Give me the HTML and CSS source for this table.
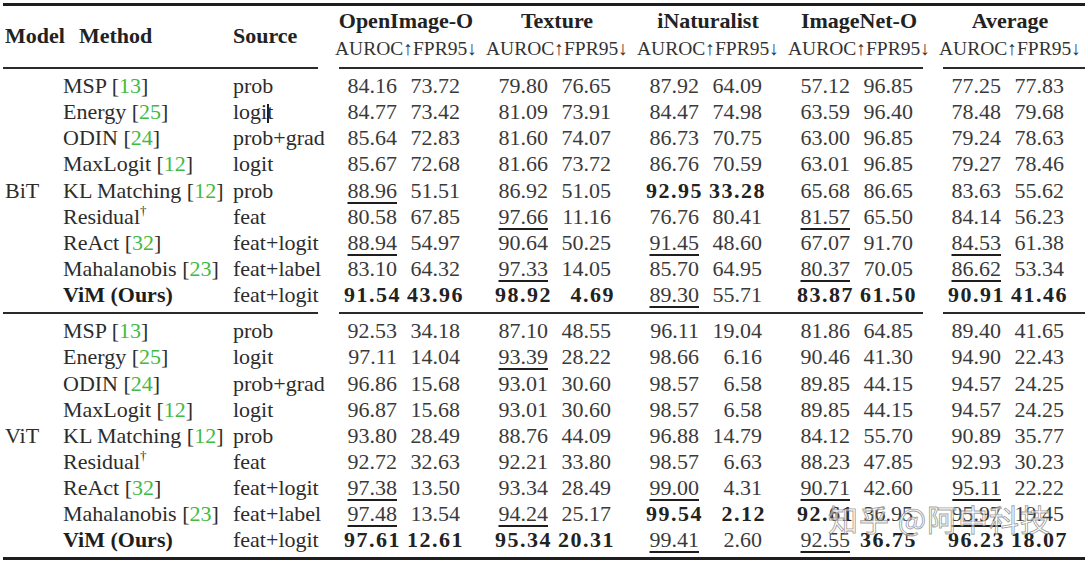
FILE: index.html
```html
<!DOCTYPE html>
<html lang="en">
<head>
<meta charset="utf-8">
<title>OOD results</title>
<link rel="stylesheet" href="styles.css">
</head>
<body>
<div class="tbl">
  <div class="head">
    <div class="hmdl">Model</div>
    <div class="hmeth">Method</div>
    <div class="hsrc">Source</div>
    <div class="hvals">
      <div class="hg"><div class="t">OpenImage-O</div><div class="s">AUROC↑FPR95↓</div></div>
      <div class="hg"><div class="t">Texture</div><div class="s">AUROC↑FPR95↓</div></div>
      <div class="hg"><div class="t">iNaturalist</div><div class="s">AUROC↑FPR95↓</div></div>
      <div class="hg"><div class="t">ImageNet-O</div><div class="s">AUROC↑FPR95↓</div></div>
      <div class="hg"><div class="t">Average</div><div class="s">AUROC↑FPR95↓</div></div>
    </div>
  </div>
  <div class="rule"><i class="l"></i><i class="mid"></i><i class="r"></i></div>

  <div class="row"><span class="mdl"></span><span class="meth">MSP <span class="ref">[<span class="c">13</span>]</span></span><span class="src">prob</span>
    <div class="vals"><div class="g"><span>84.16</span><span>73.72</span></div><div class="g"><span>79.80</span><span>76.65</span></div><div class="g"><span>87.92</span><span>64.09</span></div><div class="g"><span>57.12</span><span>96.85</span></div><div class="g"><span>77.25</span><span>77.83</span></div></div></div>
  <div class="row"><span class="mdl"></span><span class="meth">Energy <span class="ref">[<span class="c">25</span>]</span></span><span class="src">logi<span class="caret"></span>t</span>
    <div class="vals"><div class="g"><span>84.77</span><span>73.42</span></div><div class="g"><span>81.09</span><span>73.91</span></div><div class="g"><span>84.47</span><span>74.98</span></div><div class="g"><span>63.59</span><span>96.40</span></div><div class="g"><span>78.48</span><span>79.68</span></div></div></div>
  <div class="row"><span class="mdl"></span><span class="meth">ODIN <span class="ref">[<span class="c">24</span>]</span></span><span class="src">prob+grad</span>
    <div class="vals"><div class="g"><span>85.64</span><span>72.83</span></div><div class="g"><span>81.60</span><span>74.07</span></div><div class="g"><span>86.73</span><span>70.75</span></div><div class="g"><span>63.00</span><span>96.85</span></div><div class="g"><span>79.24</span><span>78.63</span></div></div></div>
  <div class="row"><span class="mdl"></span><span class="meth">MaxLogit <span class="ref">[<span class="c">12</span>]</span></span><span class="src">logit</span>
    <div class="vals"><div class="g"><span>85.67</span><span>72.68</span></div><div class="g"><span>81.66</span><span>73.72</span></div><div class="g"><span>86.76</span><span>70.59</span></div><div class="g"><span>63.01</span><span>96.85</span></div><div class="g"><span>79.27</span><span>78.46</span></div></div></div>
  <div class="row"><span class="mdl">BiT</span><span class="meth">KL Matching <span class="ref">[<span class="c">12</span>]</span></span><span class="src">prob</span>
    <div class="vals"><div class="g"><span><u>88.96</u></span><span>51.51</span></div><div class="g"><span>86.92</span><span>51.05</span></div><div class="g"><span><b>92.95</b></span><span><b>33.28</b></span></div><div class="g"><span>65.68</span><span>86.65</span></div><div class="g"><span>83.63</span><span>55.62</span></div></div></div>
  <div class="row"><span class="mdl"></span><span class="meth">Residual<sup>†</sup></span><span class="src">feat</span>
    <div class="vals"><div class="g"><span>80.58</span><span>67.85</span></div><div class="g"><span><u>97.66</u></span><span>11.16</span></div><div class="g"><span>76.76</span><span>80.41</span></div><div class="g"><span><u>81.57</u></span><span>65.50</span></div><div class="g"><span>84.14</span><span>56.23</span></div></div></div>
  <div class="row"><span class="mdl"></span><span class="meth">ReAct <span class="ref">[<span class="c">32</span>]</span></span><span class="src">feat+logit</span>
    <div class="vals"><div class="g"><span><u>88.94</u></span><span>54.97</span></div><div class="g"><span>90.64</span><span>50.25</span></div><div class="g"><span><u>91.45</u></span><span>48.60</span></div><div class="g"><span>67.07</span><span>91.70</span></div><div class="g"><span><u>84.53</u></span><span>61.38</span></div></div></div>
  <div class="row"><span class="mdl"></span><span class="meth">Mahalanobis <span class="ref">[<span class="c">23</span>]</span></span><span class="src">feat+label</span>
    <div class="vals"><div class="g"><span>83.10</span><span>64.32</span></div><div class="g"><span><u>97.33</u></span><span>14.05</span></div><div class="g"><span>85.70</span><span>64.95</span></div><div class="g"><span><u>80.37</u></span><span>70.05</span></div><div class="g"><span><u>86.62</u></span><span>53.34</span></div></div></div>
  <div class="row"><span class="mdl"></span><span class="meth"><strong>ViM (Ours)</strong></span><span class="src">feat+logit</span>
    <div class="vals"><div class="g"><span><b>91.54</b></span><span><b>43.96</b></span></div><div class="g"><span><b>98.92</b></span><span><b>4.69</b></span></div><div class="g"><span><u>89.30</u></span><span>55.71</span></div><div class="g"><span><b>83.87</b></span><span><b>61.50</b></span></div><div class="g"><span><b>90.91</b></span><span><b>41.46</b></span></div></div></div>

  <div class="rule mrule"><i class="l"></i><i class="mid"></i><i class="r"></i></div>

  <div class="row"><span class="mdl"></span><span class="meth">MSP <span class="ref">[<span class="c">13</span>]</span></span><span class="src">prob</span>
    <div class="vals"><div class="g"><span>92.53</span><span>34.18</span></div><div class="g"><span>87.10</span><span>48.55</span></div><div class="g"><span>96.11</span><span>19.04</span></div><div class="g"><span>81.86</span><span>64.85</span></div><div class="g"><span>89.40</span><span>41.65</span></div></div></div>
  <div class="row"><span class="mdl"></span><span class="meth">Energy <span class="ref">[<span class="c">25</span>]</span></span><span class="src">logit</span>
    <div class="vals"><div class="g"><span>97.11</span><span>14.04</span></div><div class="g"><span><u>93.39</u></span><span>28.22</span></div><div class="g"><span>98.66</span><span>6.16</span></div><div class="g"><span>90.46</span><span>41.30</span></div><div class="g"><span>94.90</span><span>22.43</span></div></div></div>
  <div class="row"><span class="mdl"></span><span class="meth">ODIN <span class="ref">[<span class="c">24</span>]</span></span><span class="src">prob+grad</span>
    <div class="vals"><div class="g"><span>96.86</span><span>15.68</span></div><div class="g"><span>93.01</span><span>30.60</span></div><div class="g"><span>98.57</span><span>6.58</span></div><div class="g"><span>89.85</span><span>44.15</span></div><div class="g"><span>94.57</span><span>24.25</span></div></div></div>
  <div class="row"><span class="mdl"></span><span class="meth">MaxLogit <span class="ref">[<span class="c">12</span>]</span></span><span class="src">logit</span>
    <div class="vals"><div class="g"><span>96.87</span><span>15.68</span></div><div class="g"><span>93.01</span><span>30.60</span></div><div class="g"><span>98.57</span><span>6.58</span></div><div class="g"><span>89.85</span><span>44.15</span></div><div class="g"><span>94.57</span><span>24.25</span></div></div></div>
  <div class="row"><span class="mdl">ViT</span><span class="meth">KL Matching <span class="ref">[<span class="c">12</span>]</span></span><span class="src">prob</span>
    <div class="vals"><div class="g"><span>93.80</span><span>28.49</span></div><div class="g"><span>88.76</span><span>44.09</span></div><div class="g"><span>96.88</span><span>14.79</span></div><div class="g"><span>84.12</span><span>55.70</span></div><div class="g"><span>90.89</span><span>35.77</span></div></div></div>
  <div class="row"><span class="mdl"></span><span class="meth">Residual<sup>†</sup></span><span class="src">feat</span>
    <div class="vals"><div class="g"><span>92.72</span><span>32.63</span></div><div class="g"><span>92.21</span><span>33.80</span></div><div class="g"><span>98.57</span><span>6.63</span></div><div class="g"><span>88.23</span><span>47.85</span></div><div class="g"><span>92.93</span><span>30.23</span></div></div></div>
  <div class="row"><span class="mdl"></span><span class="meth">ReAct <span class="ref">[<span class="c">32</span>]</span></span><span class="src">feat+logit</span>
    <div class="vals"><div class="g"><span><u>97.38</u></span><span>13.50</span></div><div class="g"><span>93.34</span><span>28.49</span></div><div class="g"><span><u>99.00</u></span><span>4.31</span></div><div class="g"><span><u>90.71</u></span><span>42.60</span></div><div class="g"><span><u>95.11</u></span><span>22.22</span></div></div></div>
  <div class="row"><span class="mdl"></span><span class="meth">Mahalanobis <span class="ref">[<span class="c">23</span>]</span></span><span class="src">feat+label</span>
    <div class="vals"><div class="g"><span><u>97.48</u></span><span>13.54</span></div><div class="g"><span><u>94.24</u></span><span>25.17</span></div><div class="g"><span><b>99.54</b></span><span><b>2.12</b></span></div><div class="g"><span><b>92.61</b></span><span>36.95</span></div><div class="g"><span><u>95.97</u></span><span>19.45</span></div></div></div>
  <div class="row"><span class="mdl"></span><span class="meth"><strong>ViM (Ours)</strong></span><span class="src">feat+logit</span>
    <div class="vals"><div class="g"><span><b>97.61</b></span><span><b>12.61</b></span></div><div class="g"><span><b>95.34</b></span><span><b>20.31</b></span></div><div class="g"><span><u>99.41</u></span><span>2.60</span></div><div class="g"><span><u>92.55</u></span><span><b>36.75</b></span></div><div class="g"><span><b>96.23</b></span><span><b>18.07</b></span></div></div></div>
</div>
<div class="wm">知乎 @阿中科技</div>
</body>
</html>
```
FILE: styles.css
```css
html, body {
  margin: 0;
  padding: 0;
  background: #ffffff;
}
body {
  font-family: "Liberation Serif", "Times New Roman", serif;
  color: #2c2c2c;
  width: 1088px;
  height: 566px;
  overflow: hidden;
}
.tbl {
  margin: 3px 0 0 3px;
  width: 1082px;
  border-top: 3px solid #1e1e1e;
  border-bottom: 3px solid #1e1e1e;
  padding-bottom: 3px;
}
.head {
  display: flex;
  height: 56px;
  font-size: 22px;
}
.hmdl, .hmeth, .hsrc {
  font-weight: bold;
  align-self: center;
  padding-top: 4px;
  box-sizing: border-box;
  color: #222;
}
.hmdl { width: 57px; padding-left: 2px; }
.hmeth { width: 170px; padding-left: 19px; }
.hsrc { width: 88px; padding-left: 3px; }
.hvals {
  display: flex;
  margin-left: 15px;
}
.hg {
  width: 151px;
  display: flex;
  flex-direction: column;
}
.hg:last-child { width: 146px; }
.hg .t {
  width: 146px;
  height: 30px;
  line-height: 30px;
  text-align: center;
  font-weight: bold;
  font-size: 22px;
  color: #222;
}
.hg .s {
  width: 146px;
  height: 26px;
  line-height: 26px;
  text-align: center;
  font-size: 19.5px;
  white-space: nowrap;
  color: #333;
}
.rule {
  display: flex;
  margin: 5px 0 4px;
}
.mrule { margin: 4px 0 4px; }
.rule i {
  display: block;
  height: 2px;
  background: #2a2a2a;
}
.rule .l { width: 315px; }
.rule .mid { margin-left: 21px; width: 584px; }
.rule .r { margin-left: 20px; width: 142px; }
.row {
  display: flex;
  align-items: center;
  height: 26.15px;
  font-size: 22px;
  line-height: 26px;
  white-space: nowrap;
}
.mdl { width: 57px; padding-left: 2px; box-sizing: border-box; }
.meth { width: 170px; padding-left: 3px; box-sizing: border-box; }
.src { width: 88px; padding-left: 3px; box-sizing: border-box; }
.meth strong { color: #1e1e1e; }
.c { color: #3fbb3f; }
sup {
  font-size: 13px;
  vertical-align: 9px;
  line-height: 0;
}
.caret {
  display: inline-block;
  width: 0;
  height: 19px;
  border-left: 2px solid #1e1e1e;
  margin-right: -2px;
  vertical-align: -4px;
}
.vals {
  display: flex;
  margin-left: 15px;
}
.g {
  display: flex;
  width: 151px;
}
.g:last-child { width: 146px; }
.g span {
  width: 64px;
  text-align: right;
  color: #3a3a3a;
}
.g span + span { width: 63px; }
.g u {
  text-decoration: underline;
  text-decoration-thickness: 2px;
  text-underline-offset: 4px;
  text-decoration-color: #1e1e1e;
}
.g b {
  font-weight: bold;
  letter-spacing: 1.5px;
  margin-right: -4px;
  color: #222;
}
.wm {
  position: absolute;
  left: 828px;
  top: 500px;
  font-family: "Noto Sans CJK SC", "Noto Sans", sans-serif;
  font-size: 30px;
  line-height: 36px;
  color: rgba(255, 255, 255, 0.62);
  -webkit-text-stroke: 0.9px rgba(120, 120, 120, 0.7);
  letter-spacing: 1px;
  white-space: nowrap;
}
```
